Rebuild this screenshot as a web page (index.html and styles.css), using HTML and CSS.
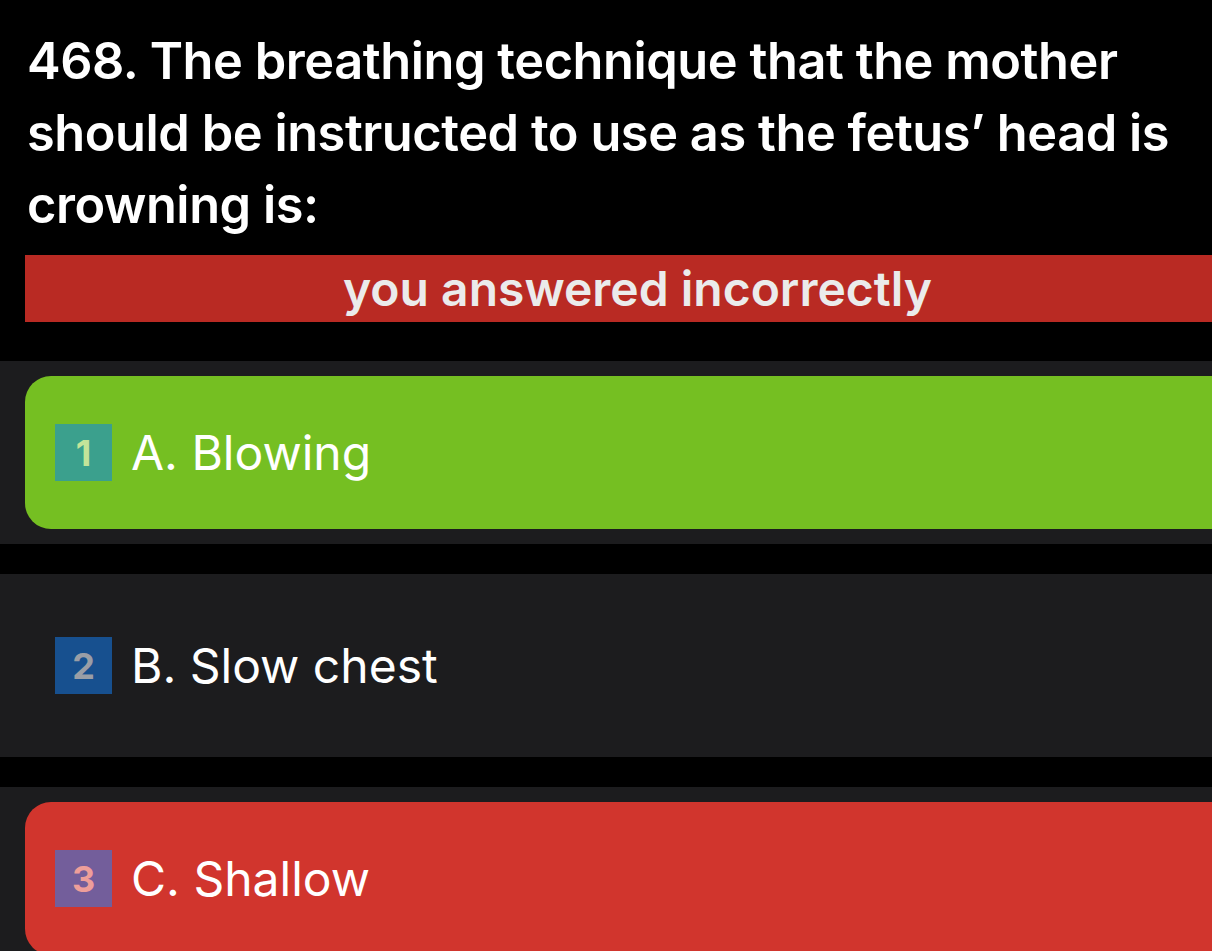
FILE: index.html
```html
<!DOCTYPE html>
<html>
<head>
<meta charset="utf-8">
<link rel="stylesheet" href="styles.css">
</head>
<body>
<div class="page">
  <h1 class="question">468. The breathing technique that the mother should be instructed to use as the fetus’ head is crowning is:</h1>
  <div class="result">you answered incorrectly</div>
  <div class="options">
    <div class="row">
      <div class="card card-correct">
        <span class="badge badge-1">1</span>
        <span class="label">A. Blowing</span>
      </div>
    </div>
    <div class="row">
      <div class="card">
        <span class="badge badge-2">2</span>
        <span class="label">B. Slow chest</span>
      </div>
    </div>
    <div class="row">
      <div class="card card-wrong">
        <span class="badge badge-3">3</span>
        <span class="label">C. Shallow</span>
      </div>
    </div>
  </div>
</div>
</body>
</html>
```

FILE: styles.css
```css
html, body {
  margin: 0;
  padding: 0;
  background: #000;
  overflow: hidden;
}
body {
  font-family: Inter, Roboto, "Liberation Sans", sans-serif;
  color: #fff;
}
.page {
  width: 1212px;
  height: 951px;
  overflow: hidden;
}
.question {
  margin: 0;
  padding: 25px 20px 0 27px;
  font-size: 50.5px;
  font-weight: 600;
  line-height: 72px;
  letter-spacing: -0.45px;
}
.result {
  margin: 14px -38px 0 25px;
  height: 67px;
  background: #b92a23;
  color: #ebebeb;
  font-size: 48px;
  font-weight: 600;
  display: flex;
  align-items: center;
  justify-content: center;
}
.options {
  margin-top: 39px;
  display: flex;
  flex-direction: column;
  gap: 30px;
}
.row {
  background: #1c1c1e;
  padding: 15px 0 15px 25px;
}
.card {
  height: 153px;
  margin-right: -40px;
  border-radius: 26px 0 0 26px;
  display: flex;
  align-items: center;
  padding-left: 30px;
  gap: 19px;
}
.card-correct {
  background: #75bf22;
}
.card-wrong {
  background: #d1352d;
}
.badge {
  width: 57px;
  height: 57px;
  display: flex;
  align-items: center;
  justify-content: center;
  font-size: 36px;
  font-weight: 700;
}
.badge-1 {
  background: #3ba08d;
  color: #c3e49a;
}
.badge-2 {
  background: #17508f;
  color: #9a9ea6;
}
.badge-3 {
  background: #735e9b;
  color: #ee9e9a;
}
.label {
  font-size: 48px;
  font-weight: 400;
  color: #fff;
}
```
